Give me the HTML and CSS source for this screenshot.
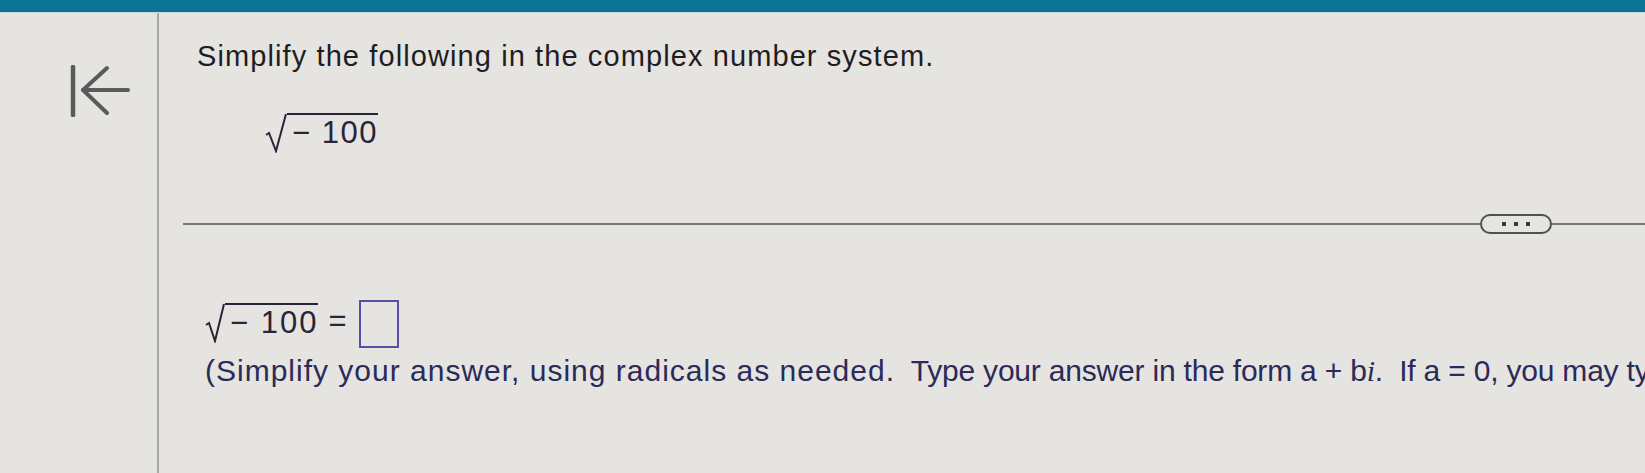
FILE: index.html
```html
<!DOCTYPE html>
<html lang="en">
<head>
<meta charset="utf-8">
<title>Simplify</title>
<link rel="stylesheet" href="styles.css">
</head>
<body>
<div class="topbar"></div>
<div class="main">
  <aside class="sidebar">
    <svg class="back-icon" width="64" height="52" viewBox="0 0 64 52">
      <line x1="4" y1="2" x2="4" y2="50" stroke="#5a5a5c" stroke-width="4.5" stroke-linecap="round"/>
      <line x1="14" y1="25" x2="59" y2="25" stroke="#5a5a5c" stroke-width="4" stroke-linecap="round"/>
      <polyline points="38,3 14,25 38,48" fill="none" stroke="#5a5a5c" stroke-width="4" stroke-linecap="round" stroke-linejoin="round"/>
    </svg>
  </aside>
  <section class="content">
    <div class="question">
      <p class="title">Simplify the following in the complex number system.</p>
      <div class="expr">
        <span class="sqrt">
          <svg class="rad" width="22" height="40" viewBox="0 0 22 40">
            <polyline points="1,22 4,20 11,38 21,1" fill="none" stroke="#2a2438" stroke-width="2"/>
          </svg>
          <span class="radicand">− 100</span>
        </span>
      </div>
    </div>
    <div class="divider">
      <div class="divider-line"></div>
      <div class="pill"><span class="dot"></span><span class="dot"></span><span class="dot"></span></div>
      <div class="divider-tail"></div>
    </div>
    <div class="answer">
      <div class="answer-row">
        <span class="sqrt">
          <svg class="rad" width="20" height="40" viewBox="0 0 20 40">
            <polyline points="1,22 4,20 10,38 19,1" fill="none" stroke="#2a2438" stroke-width="2"/>
          </svg>
          <span class="radicand">− 100</span>
        </span>
        <span class="equals">=</span>
        <span class="answer-box"></span>
      </div>
      <p class="hint"><span class="hint-main">(Simplify your answer, using radicals as needed.</span><span class="hint-note">&nbsp; Type your answer in the form a + b<i>i</i>.&nbsp; If a = 0, you may type 0 for a.)</span></p>
    </div>
  </section>
</div>
</body>
</html>
```
FILE: styles.css
```css
html, body {
  margin: 0;
  padding: 0;
}
body {
  width: 1645px;
  height: 473px;
  overflow: hidden;
  background: #e5e4e0;
  font-family: "Liberation Sans", Arial, sans-serif;
  color: #242226;
}
.topbar {
  height: 12px;
  background: #0b7396;
  border-bottom: 1px solid #c6d9dc;
}
.main {
  display: flex;
  height: 460px;
}
.sidebar {
  width: 159px;
  flex: none;
  border-right: 2px solid #a9a9a9;
  padding: 52px 0 0 69px;
  box-sizing: border-box;
}
.back-icon {
  display: block;
}
.content {
  flex: 1;
  min-width: 0;
  overflow: hidden;
  padding: 27px 0 0 24px;
}
.question {
  padding-left: 14px;
}
.title {
  margin: 0;
  font-size: 29px;
  line-height: 32px;
  letter-spacing: 1.1px;
  color: #1f1d22;
  white-space: nowrap;
}
.expr {
  margin: 41px 0 0 68px;
  height: 40px;
}
.sqrt {
  display: inline-flex;
  align-items: flex-start;
  height: 40px;
  color: #2a2438;
}
.rad {
  display: block;
  flex: none;
}
.radicand {
  border-top: 2px solid #2a2438;
  padding: 2px 0 0 5px;
  font-size: 31px;
  line-height: 32px;
  letter-spacing: 2px;
  white-space: nowrap;
}
.expr .radicand {
  letter-spacing: 1.5px;
}
.divider {
  display: flex;
  align-items: center;
  height: 20px;
  margin-top: 61px;
}
.divider-line {
  flex: 1;
  height: 2px;
  background: #77777a;
}
.pill {
  flex: none;
  width: 72px;
  height: 20px;
  box-sizing: border-box;
  border: 2px solid #505054;
  border-radius: 10px;
  display: flex;
  align-items: center;
  justify-content: center;
  gap: 8px;
}
.dot {
  width: 4px;
  height: 4px;
  background: #3a3a3e;
}
.divider-tail {
  flex: none;
  width: 93px;
  height: 2px;
  background: #77777a;
}
.answer {
  padding-left: 22px;
}
.answer-row {
  display: flex;
  align-items: flex-start;
  margin-top: 66px;
  height: 48px;
}
.answer-row .sqrt {
  margin-top: 3px;
}
.equals {
  margin: 5px 0 0 10px;
  font-size: 31px;
  line-height: 32px;
  color: #2a2438;
}
.answer-box {
  margin-left: 12px;
  width: 40px;
  height: 48px;
  box-sizing: border-box;
  border: 2px solid #5552a6;
}
.hint {
  margin: 7px 0 0 0;
  font-size: 30px;
  line-height: 32px;
  color: #2b2a58;
  white-space: nowrap;
}
.hint-main {
  letter-spacing: 1px;
}
.hint-note {
  letter-spacing: -0.2px;
}
.hint i {
  font-family: "Liberation Serif", "Times New Roman", serif;
  font-style: italic;
}
```
